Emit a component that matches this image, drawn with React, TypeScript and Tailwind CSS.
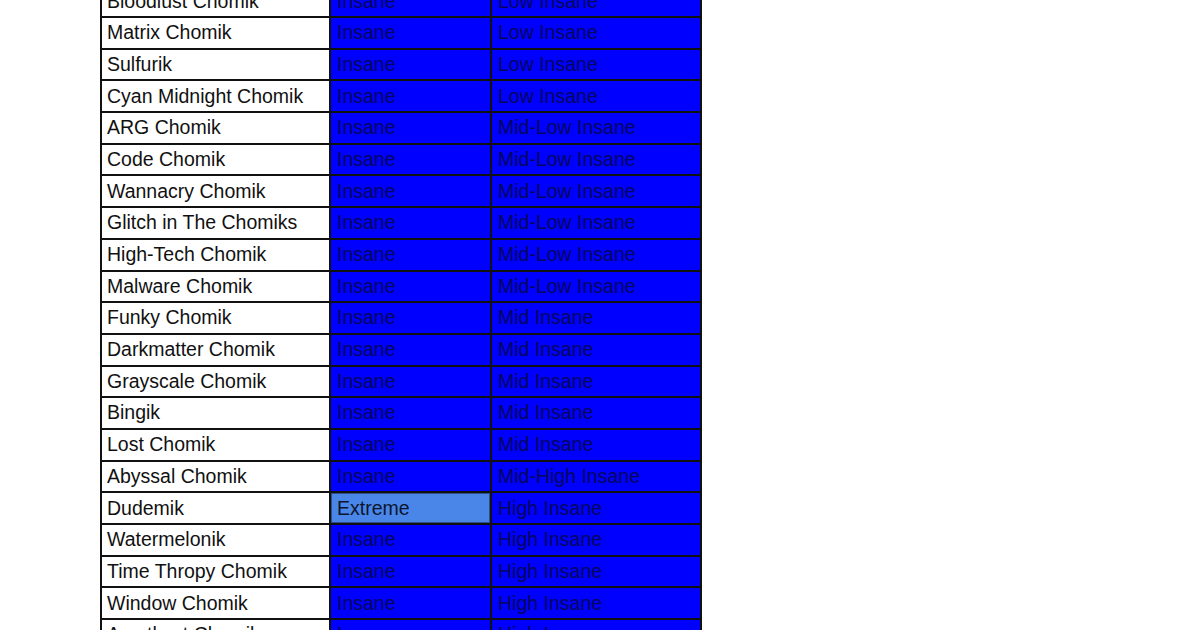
const ROWS: [string, string, string][] = [
  ['Bloodlust Chomik', 'Insane', 'Low Insane'],
  ['Matrix Chomik', 'Insane', 'Low Insane'],
  ['Sulfurik', 'Insane', 'Low Insane'],
  ['Cyan Midnight Chomik', 'Insane', 'Low Insane'],
  ['ARG Chomik', 'Insane', 'Mid-Low Insane'],
  ['Code Chomik', 'Insane', 'Mid-Low Insane'],
  ['Wannacry Chomik', 'Insane', 'Mid-Low Insane'],
  ['Glitch in The Chomiks', 'Insane', 'Mid-Low Insane'],
  ['High-Tech Chomik', 'Insane', 'Mid-Low Insane'],
  ['Malware Chomik', 'Insane', 'Mid-Low Insane'],
  ['Funky Chomik', 'Insane', 'Mid Insane'],
  ['Darkmatter Chomik', 'Insane', 'Mid Insane'],
  ['Grayscale Chomik', 'Insane', 'Mid Insane'],
  ['Bingik', 'Insane', 'Mid Insane'],
  ['Lost Chomik', 'Insane', 'Mid Insane'],
  ['Abyssal Chomik', 'Insane', 'Mid-High Insane'],
  ['Dudemik', 'Extreme', 'High Insane'],
  ['Watermelonik', 'Insane', 'High Insane'],
  ['Time Thropy Chomik', 'Insane', 'High Insane'],
  ['Window Chomik', 'Insane', 'High Insane'],
  ['Amethyst Chomik', 'Insane', 'High Insane'],
];

export default function App() {
  return (
    <div className="h-[630px] w-[1200px] overflow-hidden bg-white font-['Liberation_Sans',Arial,sans-serif] text-[19.5px]">
      <div className="ml-[100px] mt-[-13.7px] w-[602px] border-l-2 border-[#111]">
        {ROWS.map(([name, tier, sub]) => {
          const extreme = tier === 'Extreme';
          return (
            <div key={name} className="grid h-[31.7px] grid-cols-[229px_161px_210px]">
              <div className="flex items-center border-b-2 border-r-2 border-[#111] bg-white pl-[5px] text-[#111]">
                {name}
              </div>
              <div
                className={
                  extreme
                    ? 'flex items-center border-b-2 border-r-2 border-[#111] bg-[#4a86e8] pl-[6px] text-[#0b1530] shadow-[inset_0_0_0_1px_#2d4f8a]'
                    : 'flex items-center border-b-2 border-r-2 border-[#111] bg-[#0000ff] pl-[6px] text-[#06065e]'
                }
              >
                {tier}
              </div>
              <div className="flex items-center border-b-2 border-r-2 border-[#111] bg-[#0000ff] pl-[6px] text-[#06065e]">
                {sub}
              </div>
            </div>
          );
        })}
      </div>
    </div>
  );
}
